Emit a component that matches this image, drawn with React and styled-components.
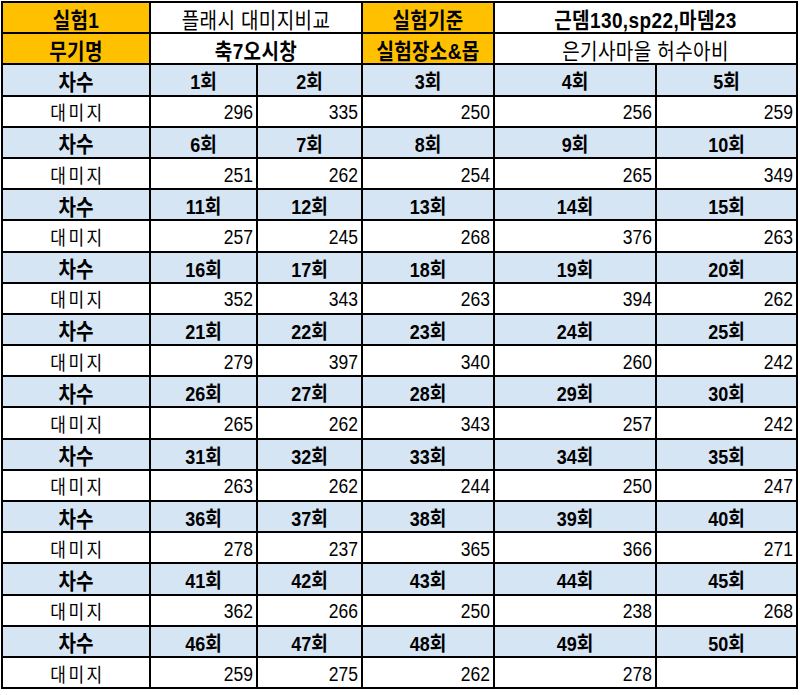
import React from 'react'
import styled, { createGlobalStyle } from 'styled-components'

const GlobalStyle = createGlobalStyle`
  body {
    margin: 0;
    background: #ffffff;
    font-family: "Liberation Sans", "Noto Sans CJK KR", sans-serif;
  }
`

const damage = [
  [296, 335, 250, 256, 259],
  [251, 262, 254, 265, 349],
  [257, 245, 268, 376, 263],
  [352, 343, 263, 394, 262],
  [279, 397, 340, 260, 242],
  [265, 262, 343, 257, 242],
  [263, 262, 244, 250, 247],
  [278, 237, 365, 366, 271],
  [362, 266, 250, 238, 268],
  [259, 275, 262, 278, null],
]

const tones = {
  orange: '#ffc000',
  blue: '#d6e5f4',
  white: '#ffffff',
}

const Sheet = styled.div`
  display: grid;
  grid-template-columns: 146px 105px 103px 130px 160px 139px;
  grid-auto-rows: 29.2px;
  gap: 2px;
  padding: 2px;
  margin: 1px 0 0 1px;
  width: max-content;
  background: #000000;
`

const Cell = styled.div`
  display: flex;
  align-items: center;
  justify-content: ${(p) => p.$align || 'center'};
  grid-column: span ${(p) => p.$span || 1};
  padding: 1px 5px 0;
  background: ${(p) => tones[p.$tone || 'white']};
  color: #000000;
  font-size: ${(p) => p.$size || 19}px;
  font-weight: ${(p) => (p.$bold ? 700 : 400)};
  white-space: nowrap;
  overflow: hidden;
`

// the sheet capture is a little taller than wide, so glyphs get stretched
const Text = styled.span`
  display: inline-block;
  transform: scaleY(1.15);
`

const InfoLabel = styled(Cell).attrs({ $tone: 'orange', $bold: true })`
  letter-spacing: 0.3px;
`

const InfoValue = styled(Cell).attrs({ $span: 2 })`
  letter-spacing: 0.4px;
`

const RoundLabel = styled(Cell).attrs({ $tone: 'blue', $bold: true })``

const DamageLabel = styled(Cell).attrs({ $size: 17 })`
  letter-spacing: 2.5px;
  padding-left: 8px;
`

const DamageValue = styled(Cell).attrs({ $align: 'flex-end', $size: 17.5 })`
  padding: 3px 3px 0 0;
`

function Round({ index, values }) {
  return (
    <>
      <RoundLabel><Text>차수</Text></RoundLabel>
      {values.map((_, i) => (
        <RoundLabel key={i} $size={18}><Text>{index * 5 + i + 1}회</Text></RoundLabel>
      ))}
      <DamageLabel><Text>대미지</Text></DamageLabel>
      {values.map((v, i) => (
        <DamageValue key={i}><Text>{v ?? ''}</Text></DamageValue>
      ))}
    </>
  )
}

export default function App() {
  return (
    <>
      <GlobalStyle />
      <Sheet>
        <InfoLabel><Text>실험1</Text></InfoLabel>
        <InfoValue><Text>플래시 대미지비교</Text></InfoValue>
        <InfoLabel><Text>실험기준</Text></InfoLabel>
        <InfoValue $bold><Text>근뎀130,sp22,마뎀23</Text></InfoValue>

        <InfoLabel><Text>무기명</Text></InfoLabel>
        <InfoValue $bold><Text>축7오시창</Text></InfoValue>
        <InfoLabel><Text>실험장소&amp;몹</Text></InfoLabel>
        <InfoValue><Text>은기사마을 허수아비</Text></InfoValue>

        {damage.map((values, i) => (
          <Round key={i} index={i} values={values} />
        ))}
      </Sheet>
    </>
  )
}
